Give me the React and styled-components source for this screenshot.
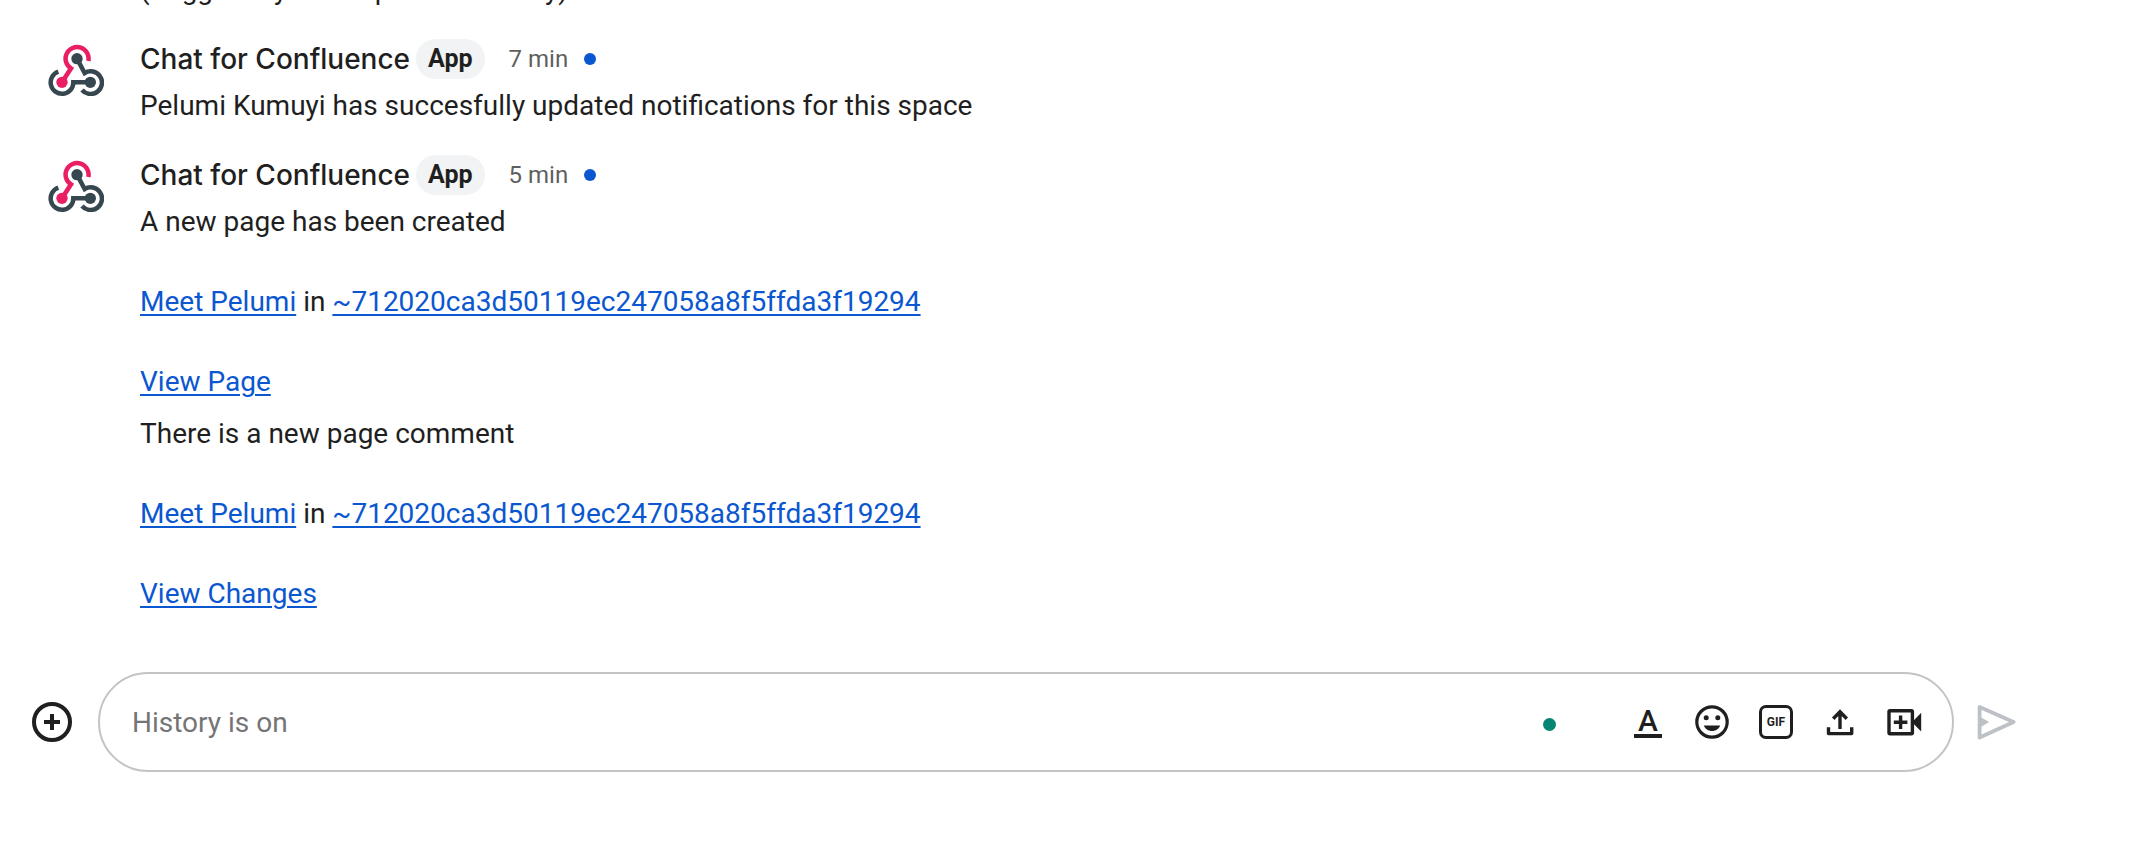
import styled, { createGlobalStyle } from "styled-components";

const GlobalStyle = createGlobalStyle`
  * {
    box-sizing: border-box;
  }
  body {
    margin: 0;
    background: white;
    color: #1f1f1f;
    font-family: Roboto, "Liberation Sans", sans-serif;
  }
`;

const Page = styled.div`
  display: flex;
  flex-direction: column;
  height: 100vh;
`;

// newest messages stay at the bottom, older ones run off the top
const MessageList = styled.main`
  display: flex;
  flex: 1;
  flex-direction: column;
  justify-content: flex-end;
  gap: 29px;
  min-height: 0;
  padding: 0 48px 58px;
  overflow: hidden;
`;

const Message = styled.article`
  display: flex;
  flex-shrink: 0;
  gap: 36px;
`;

const AvatarSlot = styled.div`
  flex-shrink: 0;
  width: 56px;
  padding-top: 5px;

  svg {
    display: block;
  }
`;

const MessageContent = styled.div`
  display: flex;
  flex-direction: column;
  min-width: 0;
`;

const MessageHeader = styled.header`
  display: flex;
  align-items: center;
  height: 40px;
  margin-bottom: 7px;
`;

const Sender = styled.span`
  font-family: Inter, Roboto, sans-serif;
  font-size: 28px;
  font-weight: 500;
  line-height: 40px;
`;

const Badge = styled.span`
  margin-left: 6px;
  padding: 0 12px;
  border-radius: 20px;
  background: #f1f3f4;
  font-size: 25px;
  font-weight: 700;
  line-height: 40px;
`;

const Time = styled.time`
  margin-left: 24px;
  color: #5f5f5f;
  font-size: 24px;
  line-height: 40px;
`;

const UnreadDot = styled.span`
  width: 12px;
  height: 12px;
  margin-left: 16px;
  border-radius: 50%;
  background: #0b57d0;
`;

const Body = styled.div`
  display: flex;
  flex-direction: column;
  gap: 12px;
`;

const Paragraphs = styled.div`
  display: flex;
  flex-direction: column;
  gap: 40px;
`;

const Text = styled.p`
  margin: 0;
  font-size: 28px;
  line-height: 40px;
`;

const Link = styled.a`
  color: #0b57d0;
  text-decoration: underline;
  text-decoration-thickness: 2px;
  text-underline-offset: 3px;
`;

const Composer = styled.form`
  display: flex;
  flex-shrink: 0;
  align-items: center;
  padding: 0 120px 86px 32px;
`;

const IconButton = styled.button`
  display: flex;
  flex-shrink: 0;
  align-items: center;
  justify-content: center;
  width: 40px;
  height: 40px;
  padding: 0;
  border: none;
  background: none;
  color: ${(p) => p.$color || "#1f1f1f"};
  cursor: pointer;
`;

const InputBox = styled.div`
  display: flex;
  flex: 1;
  align-items: center;
  height: 100px;
  margin: 0 22px 0 26px;
  padding: 0 28px 0 32px;
  border: 2px solid #c4c4c4;
  border-radius: 50px;
`;

const MessageInput = styled.input`
  flex: 1;
  min-width: 0;
  height: 40px;
  padding: 0;
  outline: none;
  border: none;
  background: none;
  color: #1f1f1f;
  font-family: inherit;
  font-size: 28px;

  &::placeholder {
    color: #757575;
    opacity: 1;
  }
`;

const StatusDot = styled.span`
  width: 13px;
  height: 13px;
  margin: 4px 72px 0 24px;
  border-radius: 50%;
  background: #058572;
`;

const Tools = styled.div`
  display: flex;
  gap: 24px;
`;

const FormatLetter = styled.span`
  width: 28px;
  height: 32px;
  border-bottom: 4px solid currentColor;
  font-family: Roboto, sans-serif;
  font-size: 30px;
  font-weight: 500;
  line-height: 30px;
  text-align: center;
`;

const GifLabel = styled.span`
  width: 34px;
  height: 34px;
  border: 3px solid currentColor;
  border-radius: 7px;
  font-family: Roboto, sans-serif;
  font-size: 12px;
  font-weight: 700;
  line-height: 28px;
  text-align: center;
`;

const WebhookLogo = () => (
  <svg width="56" height="52" viewBox="55 41 168 156" fill="none" strokeWidth="13.5" aria-hidden="true">
    <g stroke="#37474f">
      <path d="M86 124A34 34 0 1 0 131 156H182" />
      <path d="M142 85L165 128A34 34 0 1 1 157 179" />
    </g>
    <path d="M176 92A34.5 34.5 0 1 0 124 114L97 156" stroke="#e91e63" />
    <circle cx="142" cy="85" r="17" fill="#37474f" />
    <circle cx="182" cy="156" r="17" fill="#37474f" />
    <circle cx="97" cy="156" r="17" fill="#e91e63" />
  </svg>
);

const AddIcon = () => (
  <svg width="40" height="40" viewBox="0 0 40 40" fill="none" stroke="currentColor" strokeWidth="4">
    <circle cx="20" cy="20" r="18" />
    <path d="M12 20h16M20 12v16" />
  </svg>
);

const EmojiIcon = () => (
  <svg width="40" height="40" viewBox="0 0 40 40" fill="currentColor">
    <circle cx="20" cy="20" r="15.2" fill="none" stroke="currentColor" strokeWidth="3.2" />
    <circle cx="14.2" cy="15.8" r="2.5" />
    <circle cx="25.8" cy="15.8" r="2.5" />
    <path d="M11.8 23.4h16.4c-1.3 3.4-4.4 5.5-8.2 5.5s-6.9-2.1-8.2-5.5z" />
  </svg>
);

const UploadIcon = () => (
  <svg width="40" height="40" viewBox="0 0 40 40" fill="none" stroke="currentColor" strokeWidth="3.4">
    <path d="M20 27V9.8M13.2 16.8L20 9.8l6.8 7" />
    <path d="M8.5 25.2v6.4h23.2v-6.4" strokeLinejoin="round" />
  </svg>
);

const VideoIcon = () => (
  <svg width="40" height="40" viewBox="0 0 40 40" fill="none" stroke="currentColor" strokeWidth="3.4">
    <rect x="5" y="8.7" width="23.4" height="23" rx="1" />
    <path d="M16.6 13.4v13.6M9.8 20.2h13.6" />
    <path d="M28 20.2l9.2-9.4v18.8z" fill="currentColor" stroke="none" />
  </svg>
);

const SendIcon = () => (
  <svg width="40" height="40" viewBox="0 0 40 40" fill="none" stroke="currentColor" strokeWidth="3.8">
    <path d="M3.6 5L37.6 20 3.6 35.4z" strokeLinejoin="round" />
    <path d="M4 14.8l9.2 5.3L4 25.5z" fill="currentColor" stroke="none" />
  </svg>
);

const spaceId = "~712020ca3d50119ec247058a8f5ffda3f19294";

function AppMessage({ time, children }) {
  return (
    <Message>
      <AvatarSlot>
        <WebhookLogo />
      </AvatarSlot>
      <MessageContent>
        <MessageHeader>
          <Sender>Chat for Confluence</Sender>
          <Badge>App</Badge>
          <Time>{time}</Time>
          <UnreadDot />
        </MessageHeader>
        <Body>{children}</Body>
      </MessageContent>
    </Message>
  );
}

function PageUpdate({ title, action }) {
  return (
    <Paragraphs>
      <Text>{title}</Text>
      <Text>
        <Link href="#page">Meet Pelumi</Link> in <Link href="#space">{spaceId}</Link>
      </Text>
      <Text>
        <Link href="#view">{action}</Link>
      </Text>
    </Paragraphs>
  );
}

function App() {
  return (
    <Page>
      <GlobalStyle />
      <MessageList>
        <Message>
          <AvatarSlot />
          <Text>(Suggest by a new person directly)</Text>
        </Message>
        <AppMessage time="7 min">
          <Text>Pelumi Kumuyi has succesfully updated notifications for this space</Text>
        </AppMessage>
        <AppMessage time="5 min">
          <PageUpdate title="A new page has been created" action="View Page" />
          <PageUpdate title="There is a new page comment" action="View Changes" />
        </AppMessage>
      </MessageList>

      <Composer onSubmit={(e) => e.preventDefault()}>
        <IconButton type="button" aria-label="Add">
          <AddIcon />
        </IconButton>
        <InputBox>
          <MessageInput placeholder="History is on" aria-label="History is on" />
          <StatusDot />
          <Tools>
            <IconButton type="button" aria-label="Format">
              <FormatLetter>A</FormatLetter>
            </IconButton>
            <IconButton type="button" aria-label="Emoji">
              <EmojiIcon />
            </IconButton>
            <IconButton type="button" aria-label="GIF">
              <GifLabel>GIF</GifLabel>
            </IconButton>
            <IconButton type="button" aria-label="Upload">
              <UploadIcon />
            </IconButton>
            <IconButton type="button" aria-label="Add video meeting">
              <VideoIcon />
            </IconButton>
          </Tools>
        </InputBox>
        <IconButton type="submit" aria-label="Send" $color="#bdc1c6">
          <SendIcon />
        </IconButton>
      </Composer>
    </Page>
  );
}

export default App;
